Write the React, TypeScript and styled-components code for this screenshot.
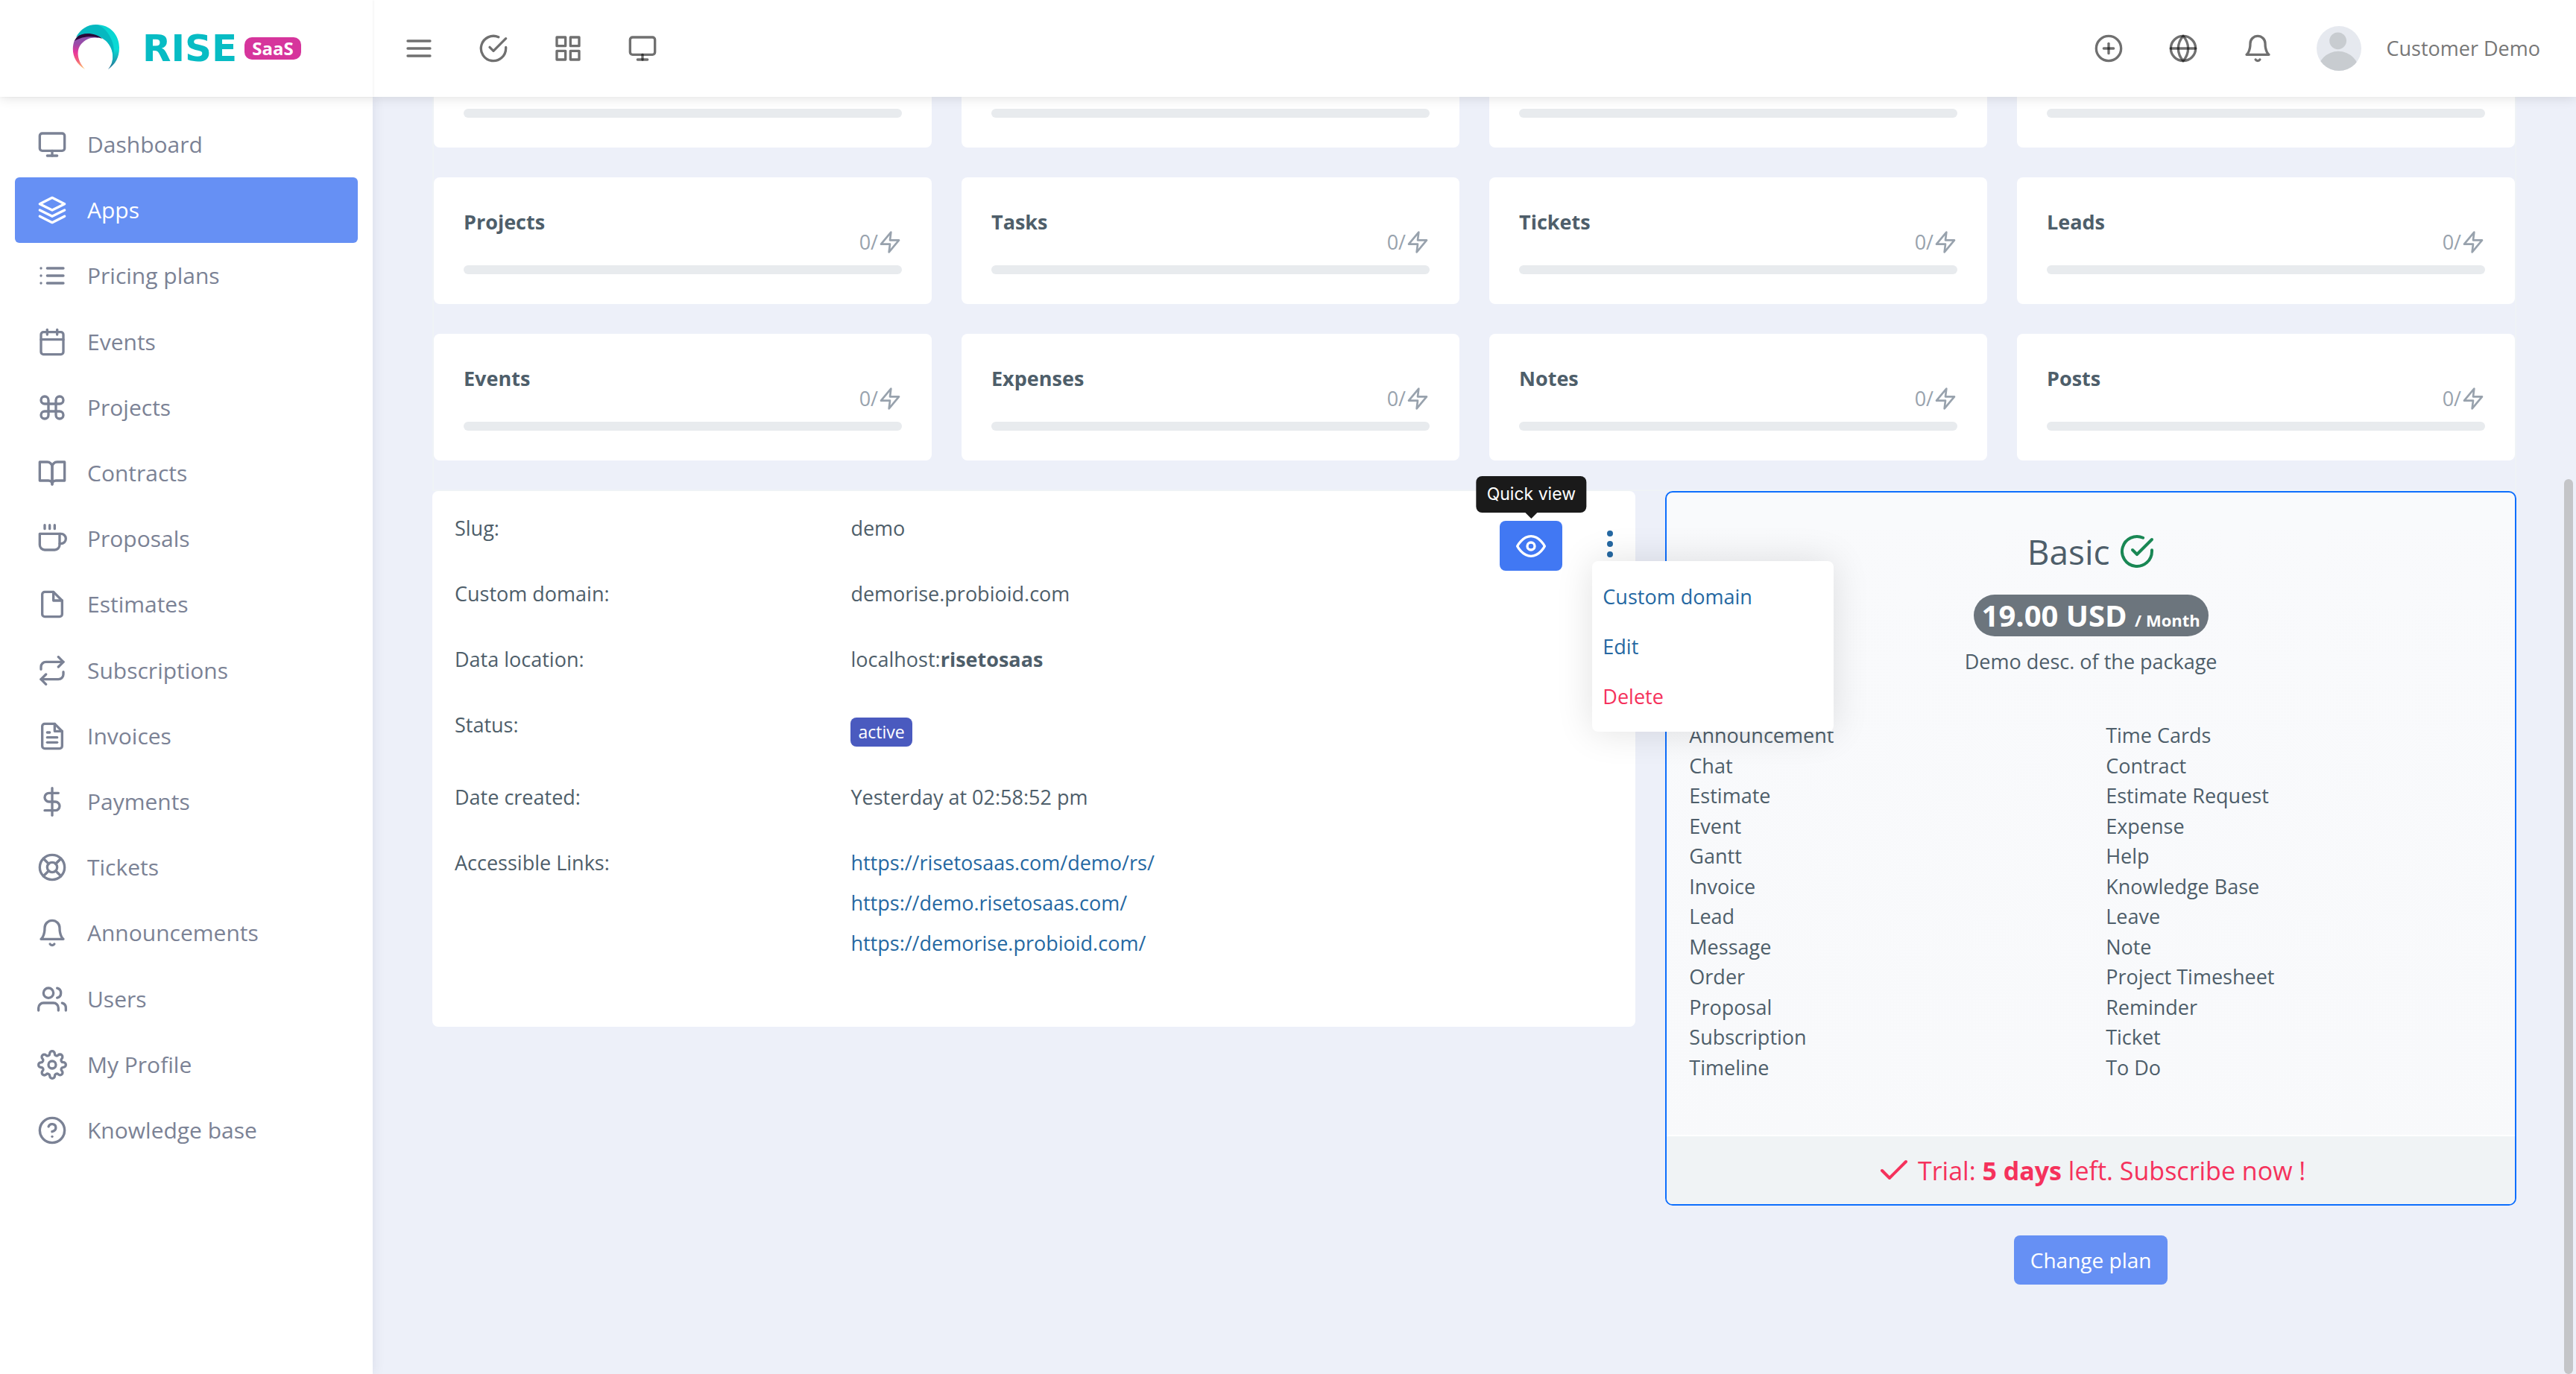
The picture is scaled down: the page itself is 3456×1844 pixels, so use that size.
import React from "react";
import styled, { createGlobalStyle, css } from "styled-components";
import {
  FiBell,
  FiBookOpen,
  FiCalendar,
  FiCheck,
  FiCheckCircle,
  FiCoffee,
  FiCommand,
  FiDollarSign,
  FiEye,
  FiFile,
  FiFileText,
  FiGlobe,
  FiGrid,
  FiHelpCircle,
  FiLayers,
  FiLifeBuoy,
  FiList,
  FiMenu,
  FiMonitor,
  FiMoreVertical,
  FiPlusCircle,
  FiRepeat,
  FiSettings,
  FiUsers,
  FiZap,
} from "react-icons/fi";
import type { IconType } from "react-icons";

const color = {
  page: "#edf0f9",
  surface: "#ffffff",
  text: "#4e5e6a",
  muted: "#98a2ad",
  menu: "#7b8295",
  link: "#2568a2",
  primary: "#6690f4",
  danger: "#f5325c",
  topbar: "#777777",
};

const GlobalStyle = createGlobalStyle`
  *, *::before, *::after { box-sizing: border-box; }
  body {
    margin: 0;
    background: ${color.page};
    color: ${color.text};
    font-family: "Open Sans", "Noto Sans", sans-serif;
    font-size: 27px;
    line-height: 40px;
  }
  h2, p, ul, dl, dd { margin: 0; padding: 0; }
  ul { list-style: none; }
  a { color: inherit; text-decoration: none; }
  button { font: inherit; border: 0; padding: 0; background: none; cursor: pointer; }
`;

const Shell = styled.div`
  display: grid;
  grid-template: 130px 1fr / 500px minmax(0, 1fr);
  min-height: 100vh;
`;

/* ---------- top bar ---------- */

const TopBar = styled.header`
  grid-column: 1 / -1;
  display: flex;
  position: relative;
  z-index: 3;
  background: ${color.surface};
  box-shadow: 0 0 16px rgba(0, 0, 0, 0.14);
`;

const Brand = styled.a`
  display: flex;
  align-items: center;
  width: 500px;
  padding-left: 97px;
  box-shadow: 1px 0 3px rgba(0, 0, 0, 0.06);
`;

const BrandMark = styled.svg`
  width: 64px;
  height: 64px;
  margin-right: 30px;
`;

const BrandName = styled.span`
  color: #07bcc4;
  font-family: "DejaVu Sans", sans-serif;
  font-size: 50px;
  font-weight: 700;
`;

const BrandTag = styled.span`
  margin-left: 10px;
  padding: 0 10px;
  border-radius: 10px;
  background: #d6359c;
  color: #ffffff;
  font-size: 24px;
  font-weight: 700;
  line-height: 30px;
`;

const BarGroup = styled.div<{ $end?: boolean }>`
  display: flex;
  align-items: center;
  ${(p) =>
    p.$end
      ? css`
          margin-left: auto;
          padding-right: 48px;
        `
      : css`
          padding-left: 12px;
        `}
`;

const BarButton = styled.button`
  display: grid;
  place-items: center;
  width: 100px;
  height: 100px;
  color: rgba(0, 0, 0, 0.56);
`;

const Account = styled.button`
  display: flex;
  align-items: center;
  gap: 34px;
  margin-left: 29px;
  color: ${color.topbar};
`;

const Avatar = styled.svg`
  width: 60px;
  height: 60px;
`;

/* ---------- side menu ---------- */

const Sidebar = styled.nav`
  position: relative;
  z-index: 2;
  padding: 20px;
  background: ${color.surface};
  box-shadow: 0 0 16px rgba(40, 50, 90, 0.1);
`;

const MenuList = styled.ul`
  display: grid;
  grid-auto-rows: 1fr;
  min-height: 1411px;
`;

const MenuLink = styled.a<{ $active?: boolean }>`
  display: flex;
  align-items: center;
  gap: 27px;
  height: 100%;
  padding: 0 30px;
  border-radius: 6px;
  color: ${(p) => (p.$active ? "#ffffff" : color.menu)};
  background: ${(p) => (p.$active ? color.primary : "transparent")};
  font-size: 30px;
`;

/* ---------- page ---------- */

const Main = styled.main`
  overflow: hidden;
  padding: 0 80px 40px;
`;

/* The page is scrolled, so the first row of cards runs under the top bar. */
const Stats = styled.section`
  display: grid;
  grid-template-columns: repeat(4, minmax(0, 1fr));
  gap: 40px;
  margin-top: -104px;
  padding-bottom: 39px;
  border: 2px solid #eff3f6;
`;

const StatCard = styled.article`
  padding: 40px;
  border-radius: 8px;
  background: ${color.surface};
`;

const StatHead = styled.div`
  display: flex;
  justify-content: space-between;
  padding-bottom: 11px;
`;

const StatName = styled.strong`
  font-weight: 700;
`;

const StatValue = styled.span`
  display: flex;
  align-items: center;
  height: 40px;
  margin-top: 27px;
  color: ${color.muted};
`;

const StatBar = styled.div`
  height: 12px;
  border-radius: 6px;
  background: #e8ebee;
`;

const Columns = styled.div`
  display: grid;
  grid-template-columns: repeat(12, minmax(0, 1fr));
  column-gap: 40px;
  align-items: start;
`;

const Details = styled.section`
  grid-column: span 7;
  position: relative;
  padding: 30px 10px 92px;
  border-radius: 8px;
  background: ${color.surface};
`;

const DetailList = styled.dl`
  display: grid;
  row-gap: 48px;
  margin: 0;
`;

const DetailRow = styled.div`
  display: grid;
  grid-template-columns: 1fr 2fr;
  align-items: start;

  > * {
    padding: 0 20px;
  }
`;

const LinkStack = styled.dd`
  display: grid;
  justify-items: start;
  row-gap: 14px;
  color: ${color.link};
`;

const Badge = styled.span`
  display: block;
  width: max-content;
  margin-top: 10px;
  padding: 0 10px;
  border-radius: 8px;
  background: #4a5abf;
  color: #ffffff;
  font-size: 23px;
  line-height: 39px;
`;

const Actions = styled.div`
  position: absolute;
  top: 40px;
  right: 10px;
  display: flex;
  align-items: flex-start;
  gap: 40px;
`;

const ViewButton = styled.button`
  position: relative;
  display: grid;
  place-items: center;
  width: 84px;
  height: 67px;
  border-radius: 8px;
  background: #4178f3;
  color: #ffffff;
`;

const Tooltip = styled.span`
  position: absolute;
  bottom: 78px;
  left: 50%;
  transform: translateX(-50%);
  padding: 0 14px;
  border-radius: 8px;
  background: #1a1a1a;
  font-family: Inter, "Open Sans", sans-serif;
  font-size: 23px;
  line-height: 49px;
  white-space: nowrap;

  &::after {
    content: "";
    position: absolute;
    top: 100%;
    left: 50%;
    margin-left: -8px;
    border: 8px solid transparent;
    border-top-color: #1a1a1a;
    border-bottom: 0;
  }
`;

const MoreButton = styled.button`
  display: grid;
  place-items: center;
  height: 62px;
  color: ${color.link};
`;

const Menu = styled.ul`
  position: absolute;
  top: 94px;
  left: calc(100% - 58px);
  z-index: 1;
  width: 324px;
  padding: 14px;
  border-radius: 8px;
  background: ${color.surface};
  box-shadow: 0 0 50px rgba(0, 0, 0, 0.12);
`;

const MenuItem = styled.a<{ $danger?: boolean }>`
  display: block;
  color: ${(p) => (p.$danger ? color.danger : color.link)};
  line-height: 67px;
`;

const PlanColumn = styled.aside`
  grid-column: span 5;
  display: grid;
  justify-items: center;
  gap: 40px;
`;

const Plan = styled.section`
  width: 100%;
  overflow: hidden;
  border: 2px solid #0d6efd;
  border-radius: 10px;
  background: linear-gradient(#f9fafc, #f8f9fb);
`;

const PlanHead = styled.div`
  display: grid;
  justify-items: center;
  padding-top: 49px;
`;

const PlanName = styled.h2`
  display: flex;
  align-items: center;
  gap: 12px;
  font-size: 46px;
  font-weight: 400;
  line-height: 60px;

  svg {
    color: #198754;
  }
`;

const Price = styled.p`
  margin: 28px 0 14px;
  padding: 0 11px;
  border-radius: 28px;
  background: #6c757d;
  color: #ffffff;
  font-size: 40px;
  font-weight: 700;
  line-height: 56px;

  small {
    font-size: 22px;
    line-height: 22px;
  }
`;

const Features = styled.ul`
  display: grid;
  grid-template-columns: 1fr 1fr;
  grid-auto-rows: 1fr;
  min-height: 486px;
  margin: 59px 0 70px;
  padding: 0 10px;

  li {
    padding-left: 20px;
  }
`;

const PlanFooter = styled.a`
  display: flex;
  justify-content: center;
  align-items: center;
  gap: 8px;
  height: 93px;
  border-top: 2px solid #ffffff;
  background: #f0f3f5;
  color: ${color.danger};
  font-size: 34px;
`;

const ChangeButton = styled.button`
  padding: 0 22px;
  border-radius: 8px;
  background: ${color.primary};
  color: #ffffff;
  font-size: 28px;
  line-height: 66px;
`;

const ScrollThumb = styled.div`
  position: fixed;
  z-index: 4;
  top: 643px;
  right: 4px;
  bottom: 0;
  width: 12px;
  border-radius: 6px;
  background: #c4c5c8;
`;

/* ---------- data ---------- */

const menu: { label: string; icon: IconType; active?: boolean }[] = [
  { label: "Dashboard", icon: FiMonitor },
  { label: "Apps", icon: FiLayers, active: true },
  { label: "Pricing plans", icon: FiList },
  { label: "Events", icon: FiCalendar },
  { label: "Projects", icon: FiCommand },
  { label: "Contracts", icon: FiBookOpen },
  { label: "Proposals", icon: FiCoffee },
  { label: "Estimates", icon: FiFile },
  { label: "Subscriptions", icon: FiRepeat },
  { label: "Invoices", icon: FiFileText },
  { label: "Payments", icon: FiDollarSign },
  { label: "Tickets", icon: FiLifeBuoy },
  { label: "Announcements", icon: FiBell },
  { label: "Users", icon: FiUsers },
  { label: "My Profile", icon: FiSettings },
  { label: "Knowledge base", icon: FiHelpCircle },
];

const shortcuts: { label: string; icon: IconType }[] = [
  { label: "Toggle menu", icon: FiMenu },
  { label: "To do", icon: FiCheckCircle },
  { label: "Apps grid", icon: FiGrid },
  { label: "Dashboards", icon: FiMonitor },
];

const tools: { label: string; icon: IconType }[] = [
  { label: "Add", icon: FiPlusCircle },
  { label: "Language", icon: FiGlobe },
  { label: "Notifications", icon: FiBell },
];

/* Unnamed entries are the cards that are scrolled out of view. */
const stats = [
  "", "", "", "",
  "Projects", "Tasks", "Tickets", "Leads",
  "Events", "Expenses", "Notes", "Posts",
];

const links = [
  "https://risetosaas.com/demo/rs/",
  "https://demo.risetosaas.com/",
  "https://demorise.probioid.com/",
];

const features = [
  "Announcement", "Time Cards",
  "Chat", "Contract",
  "Estimate", "Estimate Request",
  "Event", "Expense",
  "Gantt", "Help",
  "Invoice", "Knowledge Base",
  "Lead", "Leave",
  "Message", "Note",
  "Order", "Project Timesheet",
  "Proposal", "Reminder",
  "Subscription", "Ticket",
  "Timeline", "To Do",
];

function Logo() {
  return (
    <Brand href="#" aria-label="RISE SaaS">
      <BrandMark viewBox="0 0 64 64" aria-hidden="true">
        <defs>
          <linearGradient id="ring" x1="0" y1="0" x2="0" y2="1">
            <stop offset="0" stopColor="#8a55ad" />
            <stop offset="0.25" stopColor="#9a4aa8" />
            <stop offset="0.5" stopColor="#e8359c" />
            <stop offset="0.75" stopColor="#f2607a" />
            <stop offset="1" stopColor="#ffd070" />
          </linearGradient>
          <linearGradient id="sweep" x1="0" y1="0" x2="0" y2="1">
            <stop offset="0" stopColor="#08d2d0" />
            <stop offset="0.55" stopColor="#0adcd6" />
            <stop offset="1" stopColor="#2a6f92" />
          </linearGradient>
        </defs>
        <path
          d="M3 21C-2 34 1 50 17 60C6 48 5 34 12 26C18 19 26 16 36 18C26 13 12 13 3 21Z"
          fill="url(#ring)"
        />
        <path d="M3 22C6 15 12 10 22 10C30 10 36 14 40 19C30 15 14 15 3 22Z" fill="#2a0838" />
        <path
          d="M32 0C52 0 63 15 63 31C63 44 58 53 48 60C56 51 57 36 49 26C44 19 38 10 32 0Z"
          fill="url(#sweep)"
        />
        <path
          d="M5 17C11 6 20 0 32 0C42 2 50 12 54 24C57 34 56 44 53 52C57 38 51 25 41 19C30 11 16 9 5 17Z"
          fill="#06b8c0"
        />
      </BrandMark>
      <BrandName>RISE</BrandName>
      <BrandTag>SaaS</BrandTag>
    </Brand>
  );
}

export default function App() {
  return (
    <>
      <GlobalStyle />
      <Shell>
        <TopBar>
          <Logo />
          <BarGroup>
            {shortcuts.map(({ label, icon: Icon }) => (
              <BarButton key={label} aria-label={label}>
                <Icon size={40} />
              </BarButton>
            ))}
          </BarGroup>
          <BarGroup $end>
            {tools.map(({ label, icon: Icon }) => (
              <BarButton key={label} aria-label={label}>
                <Icon size={40} />
              </BarButton>
            ))}
            <Account>
              <Avatar viewBox="0 0 60 60" aria-hidden="true">
                <clipPath id="face">
                  <circle cx="30" cy="30" r="30" />
                </clipPath>
                <g clipPath="url(#face)">
                  <rect width="60" height="60" fill="#e6e9ef" />
                  <circle cx="28.6" cy="19.8" r="11.4" fill="#c8ccd0" />
                  <circle cx="29.2" cy="62" r="28.2" fill="#c8ccd0" />
                </g>
              </Avatar>
              Customer Demo
            </Account>
          </BarGroup>
        </TopBar>

        <Sidebar aria-label="Main menu">
          <MenuList>
            {menu.map(({ label, icon: Icon, active }) => (
              <li key={label}>
                <MenuLink href="#" $active={active}>
                  <Icon size={40} />
                  {label}
                </MenuLink>
              </li>
            ))}
          </MenuList>
        </Sidebar>

        <Main>
          <Stats>
            {stats.map((name, i) => (
              <StatCard key={i}>
                <StatHead>
                  <StatName>{name}</StatName>
                  <StatValue>
                    {name && "0/"}
                    <FiZap size={32} />
                  </StatValue>
                </StatHead>
                <StatBar />
              </StatCard>
            ))}
          </Stats>

          <Columns>
            <Details>
              <DetailList>
                <DetailRow>
                  <dt>Slug:</dt>
                  <dd>demo</dd>
                </DetailRow>
                <DetailRow>
                  <dt>Custom domain:</dt>
                  <dd>demorise.probioid.com</dd>
                </DetailRow>
                <DetailRow>
                  <dt>Data location:</dt>
                  <dd>
                    localhost:<b>risetosaas</b>
                  </dd>
                </DetailRow>
                <DetailRow>
                  <dt>Status:</dt>
                  <dd>
                    <Badge>active</Badge>
                  </dd>
                </DetailRow>
                <DetailRow>
                  <dt>Date created:</dt>
                  <dd>Yesterday at 02:58:52 pm</dd>
                </DetailRow>
                <DetailRow>
                  <dt>Accessible Links:</dt>
                  <LinkStack>
                    {links.map((url) => (
                      <a key={url} href={url}>
                        {url}
                      </a>
                    ))}
                  </LinkStack>
                </DetailRow>
              </DetailList>

              <Actions>
                <ViewButton aria-label="Quick view">
                  <FiEye size={40} />
                  <Tooltip role="tooltip">Quick view</Tooltip>
                </ViewButton>
                <MoreButton aria-label="More actions">
                  <FiMoreVertical size={48} />
                </MoreButton>
              </Actions>
              <Menu>
                <li>
                  <MenuItem href="#">Custom domain</MenuItem>
                </li>
                <li>
                  <MenuItem href="#">Edit</MenuItem>
                </li>
                <li>
                  <MenuItem href="#" $danger>
                    Delete
                  </MenuItem>
                </li>
              </Menu>
            </Details>

            <PlanColumn>
              <Plan>
                <PlanHead>
                  <PlanName>
                    Basic
                    <FiCheckCircle size={48} />
                  </PlanName>
                  <Price>
                    19.00 USD <small>/ Month</small>
                  </Price>
                  <p>Demo desc. of the package</p>
                </PlanHead>
                <Features>
                  {features.map((name) => (
                    <li key={name}>{name}</li>
                  ))}
                </Features>
                <PlanFooter href="#">
                  <FiCheck size={48} />
                  <span>
                    Trial: <b>5 days</b> left. Subscribe now !
                  </span>
                </PlanFooter>
              </Plan>
              <ChangeButton>Change plan</ChangeButton>
            </PlanColumn>
          </Columns>
        </Main>
      </Shell>
      <ScrollThumb />
    </>
  );
}
